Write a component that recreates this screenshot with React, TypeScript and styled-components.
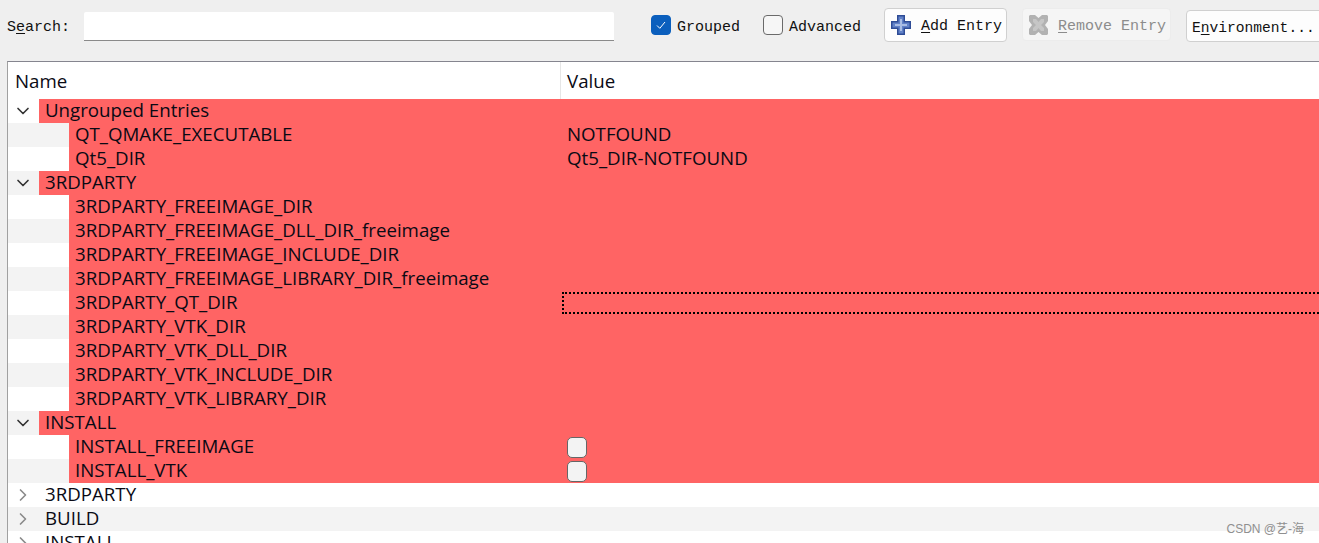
import React from "react";
import styled, { createGlobalStyle } from "styled-components";
import { LuChevronDown, LuChevronRight } from "react-icons/lu";

const GlobalStyle = createGlobalStyle`
  html, body {
    margin: 0;
    padding: 0;
    height: 100%;
    overflow: hidden;
    background: #fff;
  }
`;

const RED = "#ff6464";

const Page = styled.div`
  width: 1319px;
  height: 543px;
  position: relative;
  overflow: hidden;
  background: #efefef;
`;

const Toolbar = styled.div`
  height: 61px;
  display: flex;
  align-items: flex-start;
  font-family: "Liberation Mono", monospace;
  font-size: 15px;
  color: #111;
  & > * {
    flex-shrink: 0;
  }
`;

const SearchLabel = styled.label`
  margin: 19px 0 0 7px;
  width: 77px;
  u {
    text-underline-offset: 2px;
  }
`;

const SearchInput = styled.div`
  width: 530px;
  height: 28px;
  margin-top: 12px;
  background: #fff;
  border-bottom: 1px solid #8a8a8a;
  border-radius: 2px 2px 0 0;
`;

const CheckLabel = styled.div<{ $gap: number }>`
  display: flex;
  gap: 6px;
  margin: 15px 0 0 ${(p) => p.$gap}px;
  height: 25px;
  align-items: flex-start;
  line-height: 25px;
`;

const CheckBoxFace = styled.span<{ $checked?: boolean }>`
  width: 20px;
  height: 20px;
  box-sizing: border-box;
  border-radius: 4px;
  display: flex;
  align-items: center;
  justify-content: center;
  background: ${(p) => (p.$checked ? "#0b5fbd" : "#f6f6f6")};
  border: 1px solid ${(p) => (p.$checked ? "#0b5fbd" : "#6a6a6a")};
`;

const ToolButton = styled.div<{ $disabled?: boolean; $width: number; $left: number; $top: number; $height: number }>`
  width: ${(p) => p.$width}px;
  height: ${(p) => p.$height}px;
  margin: ${(p) => p.$top}px 0 0 ${(p) => p.$left}px;
  box-sizing: border-box;
  display: flex;
  align-items: center;
  gap: 9px;
  padding-left: 5px;
  border-radius: 4px;
  background: ${(p) => (p.$disabled ? "#f5f5f5" : "#fdfdfd")};
  border: 1px solid ${(p) => (p.$disabled ? "#ececec" : "#d0d0d0")};
  color: ${(p) => (p.$disabled ? "#8c8c8c" : "#111")};
  white-space: nowrap;
  u {
    text-underline-offset: 2px;
  }
`;

const ButtonText = styled.span<{ $size?: number }>`
  padding-top: 3px;
  font-size: ${(p) => p.$size ?? 15}px;
`;

const Table = styled.div`
  height: 482px;
  margin-left: 7px;
  background: #fff;
  border-top: 1px solid #85858f;
  border-left: 1px solid #a0a0a0;
  font-family: "Open Sans", sans-serif;
  font-size: 18.7px;
  color: #0a0a14;
`;

const Header = styled.div`
  height: 37px;
  display: grid;
  grid-template-columns: 552px 1fr;
  background: #fff;
`;

const HeaderCell = styled.div<{ $divider?: boolean }>`
  display: flex;
  align-items: center;
  padding-left: ${(p) => (p.$divider ? 6 : 7)}px;
  border-left: ${(p) => (p.$divider ? "1px solid #e6e6e6" : "none")};
`;

const Row = styled.div<{ $alt: boolean }>`
  height: 24px;
  display: flex;
  background: ${(p) => (p.$alt ? "#f3f3f3" : "#fff")};
  line-height: 22px;
  white-space: nowrap;
`;

const Branch = styled.div`
  width: 31px;
  flex-shrink: 0;
  display: flex;
  align-items: center;
  justify-content: center;
  padding-right: 1px;
  box-sizing: border-box;
`;

const GroupFill = styled.div<{ $flagged: boolean }>`
  flex: 1;
  padding-left: 6px;
  background: ${(p) => (p.$flagged ? RED : "transparent")};
`;

const Indent = styled.div`
  width: 61px;
  flex-shrink: 0;
`;

const EntryFill = styled.div`
  flex: 1;
  display: grid;
  grid-template-columns: 492px 1fr;
  background: ${RED};
`;

const EntryName = styled.div`
  padding-left: 6px;
`;

const EntryValue = styled.div<{ $focused?: boolean }>`
  position: relative;
  padding-left: 6px;
  &::after {
    content: "";
    display: ${(p) => (p.$focused ? "block" : "none")};
    position: absolute;
    left: 1px;
    right: 0;
    top: 1px;
    bottom: 1px;
    border: 2px dotted #000;
    border-right: none;
    box-sizing: border-box;
  }
`;

const ValueCheck = styled.span`
  display: block;
  width: 20px;
  height: 21px;
  margin-top: 2px;
  box-sizing: border-box;
  border-radius: 5px;
  background: #f3f3f3;
  border: 1px solid #666;
`;

const Watermark = styled.div`
  position: absolute;
  right: 15px;
  bottom: 7px;
  font-family: "Liberation Sans", "Noto Sans CJK SC", sans-serif;
  font-size: 12px;
  color: #8f8f8f;
`;

type Entry = { name: string; value?: string; check?: boolean; focused?: boolean };
type Group = { title: string; flagged: boolean; entries: Entry[] };

const groups: Group[] = [
  {
    title: "Ungrouped Entries",
    flagged: true,
    entries: [
      { name: "QT_QMAKE_EXECUTABLE", value: "NOTFOUND" },
      { name: "Qt5_DIR", value: "Qt5_DIR-NOTFOUND" },
    ],
  },
  {
    title: "3RDPARTY",
    flagged: true,
    entries: [
      { name: "3RDPARTY_FREEIMAGE_DIR" },
      { name: "3RDPARTY_FREEIMAGE_DLL_DIR_freeimage" },
      { name: "3RDPARTY_FREEIMAGE_INCLUDE_DIR" },
      { name: "3RDPARTY_FREEIMAGE_LIBRARY_DIR_freeimage" },
      { name: "3RDPARTY_QT_DIR", focused: true },
      { name: "3RDPARTY_VTK_DIR" },
      { name: "3RDPARTY_VTK_DLL_DIR" },
      { name: "3RDPARTY_VTK_INCLUDE_DIR" },
      { name: "3RDPARTY_VTK_LIBRARY_DIR" },
    ],
  },
  {
    title: "INSTALL",
    flagged: true,
    entries: [
      { name: "INSTALL_FREEIMAGE", check: true },
      { name: "INSTALL_VTK", check: true },
    ],
  },
  { title: "3RDPARTY", flagged: false, entries: [] },
  { title: "BUILD", flagged: false, entries: [] },
  { title: "INSTALL", flagged: false, entries: [] },
];

function AddIcon() {
  return (
    <svg width="22" height="22" viewBox="0 0 22 22">
      <path d="M7 1h8v6h6v8h-6v6H7v-6H1V7h6z" fill="#2e4c96" />
      <path d="M8.500 2.500h5v6h6v5h-6v6h-5v-6h-6v-5h6z" fill="#6282c8" />
      <path d="M10 5h2v5h5v2h-5v5h-2v-5H5v-2h5z" fill="#a9bde4" />
    </svg>
  );
}

function RemoveIcon() {
  return (
    <svg width="21" height="22" viewBox="0 0 21 22">
      <path
        d="M2 1h5l3.500 3L14 1h5l1 1v5l-3 4 3 4v5l-1 1h-5l-3.500-3L7 21H2l-1-1v-5l3-4-3-4V2z"
        fill="#b2b2b2"
      />
      <path d="M5 5h3l2.500 3L13 5h3v3l-3 3 3 3v3h-3l-2.500-3L8 17H5v-3l3-3-3-3z" fill="#c6c6c6" />
    </svg>
  );
}

export default function App() {
  let rowIndex = 0;
  const rows: React.ReactNode[] = [];
  groups.forEach((group) => {
    const groupAlt = rowIndex % 2 === 1;
    rows.push(
      <Row key={rowIndex} $alt={groupAlt}>
        <Branch>
          {group.flagged ? (
            <LuChevronDown size={20} color="#333" />
          ) : (
            <LuChevronRight size={20} color="#8a8a8a" />
          )}
        </Branch>
        <GroupFill $flagged={group.flagged}>{group.title}</GroupFill>
      </Row>
    );
    rowIndex++;
    group.entries.forEach((entry) => {
      rows.push(
        <Row key={rowIndex} $alt={rowIndex % 2 === 1}>
          <Indent />
          <EntryFill>
            <EntryName>{entry.name}</EntryName>
            <EntryValue $focused={entry.focused}>
              {entry.check ? <ValueCheck /> : entry.value}
            </EntryValue>
          </EntryFill>
        </Row>
      );
      rowIndex++;
    });
  });

  return (
    <Page>
      <GlobalStyle />
      <Toolbar>
        <SearchLabel>
          S<u>e</u>arch:
        </SearchLabel>
        <SearchInput />
        <CheckLabel $gap={37}>
          <CheckBoxFace $checked>
            <svg width="12" height="12" viewBox="0 0 12 12">
              <path d="M2 6.500l2.800 2.800L10 3" fill="none" stroke="#fff" strokeWidth="1" />
            </svg>
          </CheckBoxFace>
          Grouped
        </CheckLabel>
        <CheckLabel $gap={23}>
          <CheckBoxFace />
          Advanced
        </CheckLabel>
        <ToolButton $width={123} $height={34} $left={23} $top={8}>
          <AddIcon />
          <ButtonText>
            <u>A</u>dd Entry
          </ButtonText>
        </ToolButton>
        <ToolButton $disabled $width={149} $height={33} $left={15} $top={8}>
          <RemoveIcon />
          <ButtonText>
            <u>R</u>emove Entry
          </ButtonText>
        </ToolButton>
        <ToolButton $width={140} $height={32} $left={15} $top={10}>
          <ButtonText $size={14.6}>
            E<u>n</u>vironment...
          </ButtonText>
        </ToolButton>
      </Toolbar>
      <Table>
        <Header>
          <HeaderCell>Name</HeaderCell>
          <HeaderCell $divider>Value</HeaderCell>
        </Header>
        {rows}
      </Table>
      <Watermark>CSDN @艺-海</Watermark>
    </Page>
  );
}
